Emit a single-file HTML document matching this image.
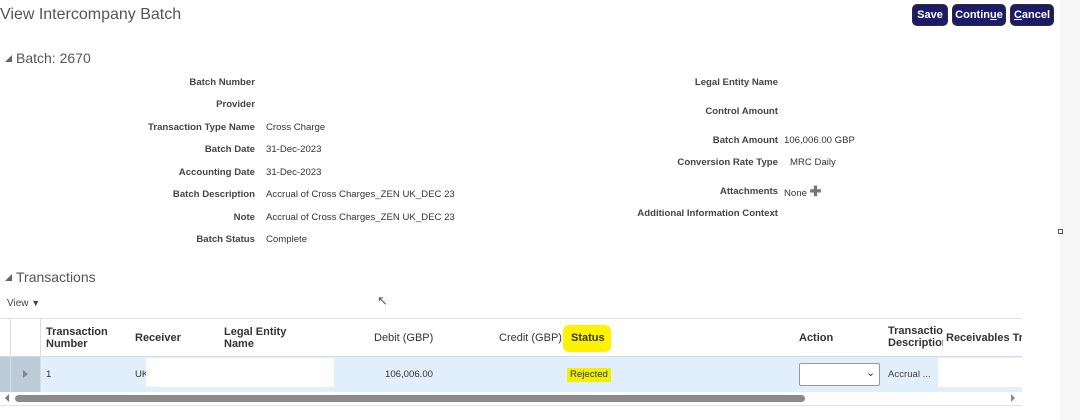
<!DOCTYPE html>
<html><head><meta charset="utf-8"><style>
*{margin:0;padding:0;box-sizing:border-box}
body{width:1080px;height:420px;overflow:hidden;background:#fff;font-family:"Liberation Sans",Arial,sans-serif;position:relative;color:#333}
.a{position:absolute;white-space:nowrap}
.lbl{font-size:9.6px;font-weight:bold;color:#444;text-align:right}
.val{font-size:9.6px;color:#333}
.btn{position:absolute;top:4px;height:22px;background:#1b1b6b;color:#fff;font-size:11px;font-weight:bold;border-radius:5px;border:1px solid #3b2a20;text-align:center;line-height:20px}
.th{font-size:11px;font-weight:bold;color:#333;line-height:12px}
.tri{display:inline-block;width:0;height:0;border-left:7px solid transparent;border-bottom:7px solid #666;margin-right:4px;vertical-align:1px}
</style></head><body>
<div class="a" style="left:1060px;top:0;width:20px;height:420px;background:#f6f6f6"></div>
<div class="a" style="left:1058px;top:229px;width:5px;height:5px;border:1px solid #555"></div>
<div class="a" style="left:0;top:6px;font-size:16px;color:#555">View Intercompany Batch</div>
<div class="btn" style="left:912px;width:36px">Save</div>
<div class="btn" style="left:952px;width:54px">Contin<u>u</u>e</div>
<div class="btn" style="left:1010px;width:44px"><u>C</u>ancel</div>
<div class="a" style="left:5px;top:50px;font-size:14px;color:#555"><span class="tri"></span>Batch: 2670</div>

<div class="a lbl" style="right:825px;top:77px">Batch Number</div>
<div class="a lbl" style="right:825px;top:99px">Provider</div>
<div class="a lbl" style="right:825px;top:122px">Transaction Type Name</div>
<div class="a lbl" style="right:825px;top:144px">Batch Date</div>
<div class="a lbl" style="right:825px;top:167px">Accounting Date</div>
<div class="a lbl" style="right:825px;top:189px">Batch Description</div>
<div class="a lbl" style="right:825px;top:212px">Note</div>
<div class="a lbl" style="right:825px;top:234px">Batch Status</div>
<div class="a val" style="left:266px;top:122px">Cross Charge</div>
<div class="a val" style="left:266px;top:144px">31-Dec-2023</div>
<div class="a val" style="left:266px;top:167px">31-Dec-2023</div>
<div class="a val" style="left:266px;top:189px">Accrual of Cross Charges_ZEN UK_DEC 23</div>
<div class="a val" style="left:266px;top:212px">Accrual of Cross Charges_ZEN UK_DEC 23</div>
<div class="a val" style="left:266px;top:234px">Complete</div>

<div class="a lbl" style="right:302px;top:77px">Legal Entity Name</div>
<div class="a lbl" style="right:302px;top:106px">Control Amount</div>
<div class="a lbl" style="right:302px;top:135px">Batch Amount</div>
<div class="a lbl" style="right:302px;top:157px">Conversion Rate Type</div>
<div class="a lbl" style="right:302px;top:186px">Attachments</div>
<div class="a lbl" style="right:302px;top:208px">Additional Information Context</div>
<div class="a val" style="left:784px;top:135px">106,006.00 GBP</div>
<div class="a val" style="left:790px;top:157px">MRC Daily</div>
<div class="a val" style="left:784px;top:186px">None <span style="color:#777;font-weight:bold;font-size:14px;line-height:10px">&#10010;</span></div>

<div class="a" style="left:5px;top:269px;font-size:14px;color:#555"><span class="tri"></span>Transactions</div>
<div class="a" style="left:7px;top:298px;font-size:10px;color:#444">View <span style="font-size:9px">&#9660;</span></div>
<div class="a" style="left:377px;top:293px;font-size:13px;color:#555">&#8598;</div>

<!-- table -->
<div class="a" style="left:0;top:318px;width:1022px;height:1px;background:#dde3e8"></div>
<div class="a" style="left:0;top:356px;width:1022px;height:1px;background:#cfdbe6"></div>
<div class="a" style="left:0;top:357px;width:1022px;height:35px;background:#e1eefb"></div>
<div class="a" style="left:0;top:357px;width:41px;height:35px;background:#bccbd8"></div>
<div class="a" style="left:10px;top:319px;width:1px;height:73px;background:#d8dee4"></div>
<div class="a" style="left:40px;top:319px;width:1px;height:73px;background:#d8dee4"></div>
<div class="a" style="left:23px;top:370px;width:0;height:0;border-left:5px solid #888;border-top:4px solid transparent;border-bottom:4px solid transparent"></div>
<div class="a" style="left:938px;top:358px;width:84px;height:29px;background:#fff"></div>

<div class="a th" style="left:46px;top:326px">Transaction<br>Number</div>
<div class="a th" style="left:135px;top:332px">Receiver</div>
<div class="a th" style="left:224px;top:326px">Legal Entity<br>Name</div>
<div class="a th" style="left:374px;top:332px;font-weight:normal">Debit (GBP)</div>
<div class="a th" style="left:499px;top:332px;font-weight:normal">Credit (GBP)</div>
<div class="a" style="left:563px;top:325px;width:48px;height:27px;background:#fff200;border-radius:6px"></div>
<div class="a th" style="left:571px;top:332px">Status</div>
<div class="a th" style="left:799px;top:332px">Action</div>
<div class="a th" style="left:888px;top:325px;width:55px;overflow:hidden">Transaction<br>Description</div>
<div class="a th" style="left:946px;top:332px;width:76px;overflow:hidden">Receivables Transaction</div>

<div class="a val" style="left:46px;top:369px">1</div>
<div class="a val" style="left:135px;top:369px">UK</div>
<div class="a" style="left:146px;top:358px;width:188px;height:29px;background:#fff"></div>
<div class="a val" style="left:385px;top:369px">106,006.00</div>
<div class="a" style="left:567px;top:368px;width:44px;height:14px;background:#f0f000"></div>
<div class="a val" style="left:570px;top:369px">Rejected</div>
<div class="a" style="left:799px;top:363px;width:81px;height:23px;background:#fff;border:1px solid #999;border-radius:2px"></div>
<div class="a" style="left:866px;top:366px;font-size:11px;color:#333">&#8964;</div>
<div class="a val" style="left:888px;top:369px;color:#444">Accrual ...</div>

<!-- scrollbar -->
<div class="a" style="left:0;top:405px;width:1022px;height:1px;background:#dde3e8"></div>
<div class="a" style="left:5px;top:394px;width:0;height:0;border-right:4px solid #777;border-top:4px solid transparent;border-bottom:4px solid transparent"></div>
<div class="a" style="left:15px;top:395px;width:790px;height:7px;background:#8a8a8a;border-radius:4px"></div>
<div class="a" style="left:1011px;top:394px;width:0;height:0;border-left:4px solid #888;border-top:4px solid transparent;border-bottom:4px solid transparent"></div>
</body></html>
